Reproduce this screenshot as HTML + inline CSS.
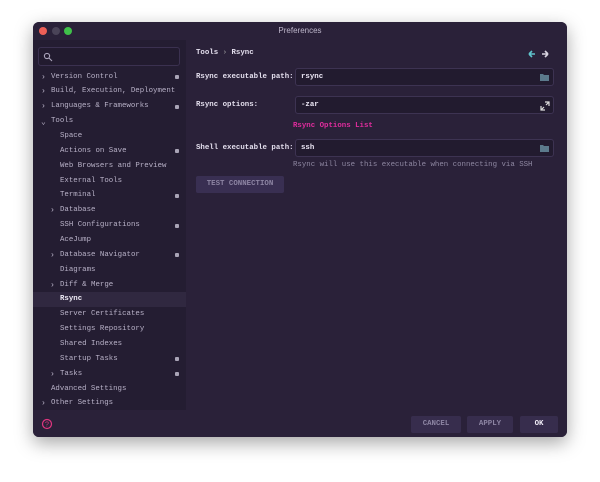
<!DOCTYPE html>
<html><head><style>
*{margin:0;padding:0;box-sizing:border-box}
body{width:600px;height:482px;background:#fff;position:relative;overflow:hidden;font-family:"Liberation Mono",monospace;font-size:7.4px;color:#b9b2c8}
.win{position:absolute;left:33px;top:22px;width:534px;height:415px;background:#2a2139;border-radius:6px;overflow:hidden;box-shadow:0 6px 18px rgba(0,0,0,.35)}
.title{position:absolute;left:0;top:0;width:534px;height:18px;background:#2a2139;text-align:center;line-height:18px;font-family:"Liberation Sans",sans-serif;font-size:8px;color:#bfb8cc}
.dot{position:absolute;top:5px;width:8px;height:8px;border-radius:50%}
.side{position:absolute;left:0;top:18px;width:153px;height:370px;background:#241d32}
.search{position:absolute;left:5px;top:7px;width:142px;height:19px;border:1px solid #3b3150;border-radius:3px;background:#221b2f}
.it{position:absolute;height:15px;line-height:15px;white-space:nowrap}
.sel{background:#302840;left:0;width:153px}
.ch{position:absolute;font-size:8px}
.bd{position:absolute;left:142px;width:4px;height:4px;background:#a9a4b6;border-radius:1px}
.lbl{position:absolute;color:#e4dfee;font-weight:bold;white-space:nowrap}
.inp{position:absolute;left:262px;width:259px;height:18px;border:1px solid #3d3352;border-radius:3px;background:#221b2f;color:#ece7f5;font-weight:bold;padding-left:5px;line-height:16px}
.btn{position:absolute;height:17px;line-height:17px;text-align:center;background:#372d4d;border-radius:2px;font-weight:bold;font-size:7.4px;color:#8d85a3}
</style></head><body>
<div class="win">
<div class="title">Preferences</div>
<div class="dot" style="left:6px;background:#ee5f57"></div>
<div class="dot" style="left:19px;background:#4a4358"></div>
<div class="dot" style="left:31px;background:#3fc04a"></div>
<div class="side">
<div class="search"><svg width="12" height="12" style="position:absolute;left:4px;top:4px"><circle cx="4" cy="4" r="2.6" stroke="#aaa3ba" fill="none" stroke-width="1.1"/><line x1="6" y1="6" x2="9" y2="9" stroke="#aaa3ba" stroke-width="1.1"/></svg></div>
</div>
<div style="position:absolute;left:0;top:0;width:153px;height:388px;">
<div class="it sel" style="top:270px"></div>
</div>
<div id="tree" style="position:absolute;left:0;top:1.5px"></div>
<div style="position:absolute;left:0;top:388px;width:534px;height:27px;background:#2a2139"></div>
<svg width="12" height="12" style="position:absolute;left:8px;top:396px"><circle cx="6" cy="6" r="4.5" stroke="#e0357f" fill="none" stroke-width="1.2"/><text x="6" y="8.5" font-size="7" fill="#e0357f" text-anchor="middle" font-family="Liberation Sans">?</text></svg>
<div class="btn" style="left:378px;top:394px;width:50px">CANCEL</div>
<div class="btn" style="left:434px;top:394px;width:46px">APPLY</div>
<div class="btn" style="left:487px;top:394px;width:38px;color:#f2eef8">OK</div>
<div class="lbl" style="left:163px;top:27px">Tools <span style="color:#aaa;font-weight:normal">›</span> Rsync</div>
<svg width="30" height="10" style="position:absolute;left:494px;top:27px"><path d="M2 5h6M2 5l3-3M2 5l3 3" stroke="#5fc4cc" stroke-width="1.6" fill="none"/><path d="M21 5h-6M21 5l-3-3M21 5l-3 3" stroke="#d8d4e0" stroke-width="1.6" fill="none"/></svg>
<div class="lbl" style="left:163px;top:51px">Rsync executable path:</div>
<div class="inp" style="top:46px">rsync</div>
<div class="lbl" style="left:163px;top:79px">Rsync options:</div>
<div class="inp" style="top:74px">-zar</div>
<div style="position:absolute;left:260px;top:100px;color:#e02c9d;font-weight:bold">Rsync Options List</div>
<div class="lbl" style="left:163px;top:122px">Shell executable path:</div>
<div class="inp" style="top:117px">ssh</div>
<div style="position:absolute;left:260px;top:139px;color:#8f88a2">Rsync will use this executable when connecting via SSH</div>
<div class="btn" style="left:163px;top:154px;width:88px;background:#392f52">TEST CONNECTION</div>
<svg width="10" height="8" style="position:absolute;left:507px;top:51px"><path d="M0 1h3l1 1h5v6H0z" fill="#5c7a8c"/></svg>
<svg width="10" height="8" style="position:absolute;left:507px;top:122px"><path d="M0 1h3l1 1h5v6H0z" fill="#5c7a8c"/></svg>
<svg width="10" height="10" style="position:absolute;left:507px;top:79px"><path d="M5 1h4v4M9 1L6 4M5 9H1V5M1 9l3-3" stroke="#ddd" stroke-width="1.2" fill="none"/></svg>
</div>
<script>
var items=[[0,'Version Control',1,1],[0,'Build, Execution, Deployment',1,0],[0,'Languages & Frameworks',1,1],[0,'Tools',2,0],[1,'Space',0,0],[1,'Actions on Save',0,1],[1,'Web Browsers and Preview',0,0],[1,'External Tools',0,0],[1,'Terminal',0,1],[1,'Database',1,0],[1,'SSH Configurations',0,1],[1,'AceJump',0,0],[1,'Database Navigator',1,1],[1,'Diagrams',0,0],[1,'Diff & Merge',1,0],[1,'Rsync',0,0],[1,'Server Certificates',0,0],[1,'Settings Repository',0,0],[1,'Shared Indexes',0,0],[1,'Startup Tasks',0,1],[1,'Tasks',1,1],[0.5,'Advanced Settings',0,0],[0,'Other Settings',1,0]];
var h='';items.forEach(function(a,i){var y=46+i*14.86;
var tx=a[0]==1?27:18;
var c=i==15?'color:#f0ecf7;font-weight:bold;':'';
if(a[2])h+='<div class="ch" style="left:'+(tx-10)+'px;top:'+(y+3)+'px">'+(a[2]==2?'⌄':'›')+'</div>';
h+='<div class="it" style="left:'+tx+'px;top:'+y+'px;'+c+'">'+a[1].replace('&','&amp;')+'</div>';
if(a[3])h+='<div class="bd" style="top:'+(y+5.5)+'px"></div>';});
document.getElementById('tree').innerHTML=h;
</script>
</body></html>
